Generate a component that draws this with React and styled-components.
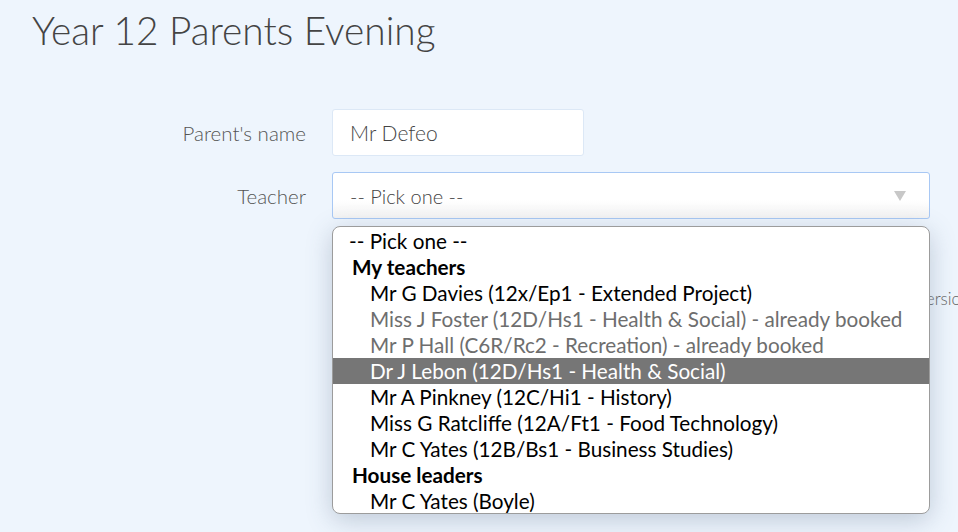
import React from 'react'
import styled, { createGlobalStyle } from 'styled-components'

const teachers = [
  { name: 'Mr G Davies (12x/Ep1 - Extended Project)' },
  { name: 'Miss J Foster (12D/Hs1 - Health & Social) - already booked', booked: true },
  { name: 'Mr P Hall (C6R/Rc2 - Recreation) - already booked', booked: true },
  { name: 'Dr J Lebon (12D/Hs1 - Health & Social)', active: true },
  { name: 'Mr A Pinkney (12C/Hi1 - History)' },
  { name: 'Miss G Ratcliffe (12A/Ft1 - Food Technology)' },
  { name: 'Mr C Yates (12B/Bs1 - Business Studies)' },
]

const houseLeaders = [{ name: 'Mr C Yates (Boyle)' }]

const App = () => (
  <>
    <GlobalStyle />
    <Page>
      <Title>Year 12 Parents Evening</Title>
      <Form>
        <Label>Parent's name</Label>
        <Input>Mr Defeo</Input>
        <Label>Teacher</Label>
        <SelectWrap>
          <Select>
            -- Pick one --
            <Arrow />
          </Select>
          <Menu>
            <Placeholder>-- Pick one --</Placeholder>
            <Group>My teachers</Group>
            {teachers.map(t => (
              <Option key={t.name} booked={t.booked} active={t.active}>
                {t.name}
              </Option>
            ))}
            <Group>House leaders</Group>
            {houseLeaders.map(t => (
              <Option key={t.name}>{t.name}</Option>
            ))}
          </Menu>
        </SelectWrap>
        <span />
        <Help>You can change or cancel appointments later from the booking page or the full version</Help>
      </Form>
    </Page>
  </>
)

const GlobalStyle = createGlobalStyle`
  html, body {
    margin: 0;
    background: #eef5fd;
    font-family: Lato, "Open Sans", sans-serif;
    overflow: hidden;
  }
`

const Page = styled.div`
  width: 958px;
  height: 532px;
  padding: 0 0 0 32px;
  box-sizing: border-box;
  overflow: hidden;
`

const Title = styled.h1`
  margin: 0;
  padding-top: 5px;
  font-size: 38.8px;
  line-height: 50px;
  font-weight: 300;
  color: #444;
`

const Form = styled.div`
  display: grid;
  grid-template-columns: 274px 598px;
  column-gap: 26px;
  row-gap: 16px;
  margin-top: 54px;
  align-items: center;
`

const Label = styled.div`
  text-align: right;
  font-size: 20.5px;
  font-weight: 300;
  color: #555;
`

const Input = styled.div`
  width: 252px;
  height: 47px;
  box-sizing: border-box;
  padding: 0 17px;
  display: flex;
  align-items: center;
  background: #fff;
  border: 1px solid #dce8f6;
  border-radius: 3px;
  font-size: 21px;
  font-weight: 300;
  color: #444;
`

const SelectWrap = styled.div`
  position: relative;
`

const Select = styled.div`
  position: relative;
  height: 47px;
  box-sizing: border-box;
  padding: 0 17px;
  display: flex;
  align-items: center;
  background: linear-gradient(#fff 60%, #f3f3f3);
  border: 1px solid #a8c8f4;
  border-radius: 3px;
  font-size: 20px;
  font-weight: 300;
  color: #444;
`

const Arrow = styled.span`
  position: absolute;
  right: 23px;
  top: 18px;
  width: 0;
  height: 0;
  border-left: 6px solid transparent;
  border-right: 6px solid transparent;
  border-top: 10px solid #c8c8c8;
`

const Menu = styled.div`
  position: absolute;
  top: 54px;
  left: 0;
  width: 598px;
  height: 288px;
  box-sizing: border-box;
  padding-top: 1px;
  background: #fff;
  border: 1.5px solid #9c9c9c;
  border-radius: 8px;
  overflow: hidden;
  box-shadow: 0 6px 26px rgba(70, 90, 120, 0.28);
  z-index: 2;
  font-size: 20.7px;
`

const Row = styled.div`
  height: 26px;
  line-height: 26px;
  white-space: nowrap;
  color: #000;
`

const Placeholder = styled(Row)`
  padding-left: 16px;
`

const Group = styled(Row)`
  padding-left: 19px;
  font-weight: 700;
`

const Option = styled(Row)`
  padding-left: 37px;
  color: ${p => (p.active ? '#fff' : p.booked ? '#6e6e6e' : '#000')};
  background: ${p => (p.active ? '#767676' : 'transparent')};
`

const Help = styled.div`
  white-space: nowrap;
  font-size: 17px;
  font-weight: 300;
  color: #666;
  margin: 53px 0 0 9px;
`

export default App
